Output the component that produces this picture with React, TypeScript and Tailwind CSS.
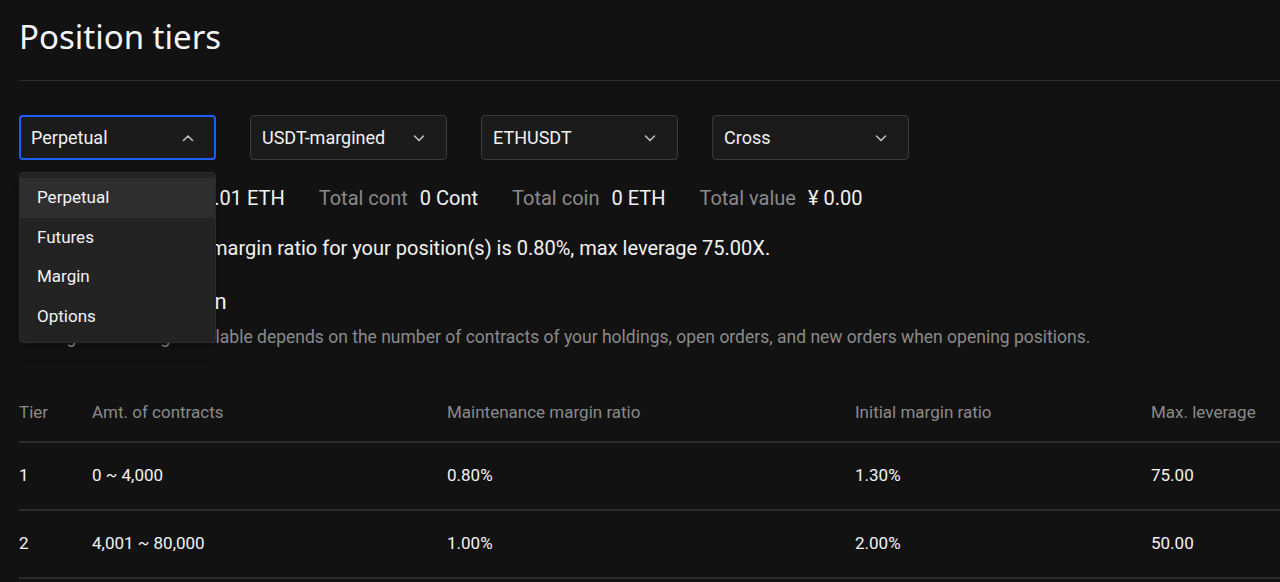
import React from "react";

const Chevron = ({ up = false }: { up?: boolean }) => (
  <svg width="14" height="14" viewBox="0 0 14 14" fill="none" className="text-[#bdbdbd]">
    <path
      d={up ? "M2.5 9.5 L7 5 L11.5 9.5" : "M2.5 5 L7 9.5 L11.5 5"}
      stroke="currentColor"
      strokeWidth="1.6"
      strokeLinecap="round"
      strokeLinejoin="round"
    />
  </svg>
);

function Select({ label, active = false }: { label: string; active?: boolean }) {
  return (
    <div
      className={
        active
          ? "w-[197px] h-[45px] rounded-[4px] border-2 border-[#1d5df5] bg-[#1b1b1b] flex items-center justify-between pl-[10px] pr-[19px]"
          : "w-[197px] h-[45px] rounded-[4px] border border-[#3b3b3b] bg-[#1b1b1b] flex items-center justify-between pl-[11px] pr-[20px]"
      }
    >
      <span className="text-[18px] text-[#f2f2f2]">{label}</span>
      <Chevron up={active} />
    </div>
  );
}

export default function App() {
  const rows = [
    ["1", "0 ~ 4,000", "0.80%", "1.30%", "75.00"],
    ["2", "4,001 ~ 80,000", "1.00%", "2.00%", "50.00"],
  ];
  return (
    <div
      className="w-[1280px] h-[582px] overflow-hidden bg-[#121212] text-white"
      style={{ fontFamily: "Roboto, 'Noto Sans', sans-serif" }}
    >
      <div className="pl-[19px] pt-[14px]">
        <h1
          className="text-[33px] leading-[46px] text-[#f5f5f5] font-normal"
          style={{ fontFamily: "'Noto Sans', sans-serif" }}
        >
          Position tiers
        </h1>
        <div className="mt-[20px] h-px bg-[#2e2e2e]" />

        <div className="relative">
          <div className="mt-[34px] flex gap-[34px]">
            <Select label="Perpetual" active />
            <Select label="USDT-margined" />
            <Select label="ETHUSDT" />
            <Select label="Cross" />
          </div>

          <div className="mt-[24px] flex items-center text-[20px] leading-[28px]">
            <span className="text-[#8a8a8a]">Contract face value</span>
            <span className="ml-[12px] text-[#f2f2f2]">0.01 ETH</span>
            <span className="ml-[34px] text-[#8a8a8a]">Total cont</span>
            <span className="ml-[12px] text-[#f2f2f2]">0 Cont</span>
            <span className="ml-[34px] text-[#8a8a8a]">Total coin</span>
            <span className="ml-[12px] text-[#f2f2f2]">0 ETH</span>
            <span className="ml-[34px] text-[#8a8a8a]">Total value</span>
            <span className="ml-[12px] text-[#f2f2f2]">¥ 0.00</span>
          </div>

          <div className="mt-[22px] text-[20px] leading-[28px] text-[#f2f2f2]">
            Current maintenance margin ratio for your position(s) is 0.80%, max leverage 75.00X.
          </div>

          <div className="mt-[26px] text-[22px] leading-[28px] text-[#f2f2f2]">Leverage explanation</div>
          <div className="mt-[9px] text-[17.5px] leading-[24px] text-[#8a8a8a]">
            The highest leverage available depends on the number of contracts of your holdings, open orders, and new orders when opening positions.
          </div>

          <div className="absolute left-0 top-[57px] w-[197px] rounded-[4px] bg-[#232323] border border-[#2c2c2c] pt-[5px] pb-[6px] shadow-lg">
            {["Perpetual", "Futures", "Margin", "Options"].map((t, i) => (
              <div
                key={t}
                className={
                  i === 0
                    ? "h-[39.5px] flex items-center pl-[17px] text-[17px] text-[#f2f2f2] bg-[#2e2e2e]"
                    : "h-[39.5px] flex items-center pl-[17px] text-[17px] text-[#f2f2f2]"
                }
              >
                {t}
              </div>
            ))}
          </div>
        </div>

        <div className="mt-[36px] text-[17px]">
          <div className="h-[58px] flex items-center text-[#8a8a8a] border-b-2 border-[#2a2a2a]">
            <div className="w-[73px]">Tier</div>
            <div className="w-[355px]">Amt. of contracts</div>
            <div className="w-[408px]">Maintenance margin ratio</div>
            <div className="w-[296px]">Initial margin ratio</div>
            <div>Max. leverage</div>
          </div>
          {rows.map((r) => (
            <div key={r[0]} className="h-[68px] flex items-center text-[#f2f2f2] border-b-2 border-[#2a2a2a]">
              <div className="w-[73px]">{r[0]}</div>
              <div className="w-[355px]">{r[1]}</div>
              <div className="w-[408px]">{r[2]}</div>
              <div className="w-[296px]">{r[3]}</div>
              <div>{r[4]}</div>
            </div>
          ))}
        </div>
      </div>
    </div>
  );
}
